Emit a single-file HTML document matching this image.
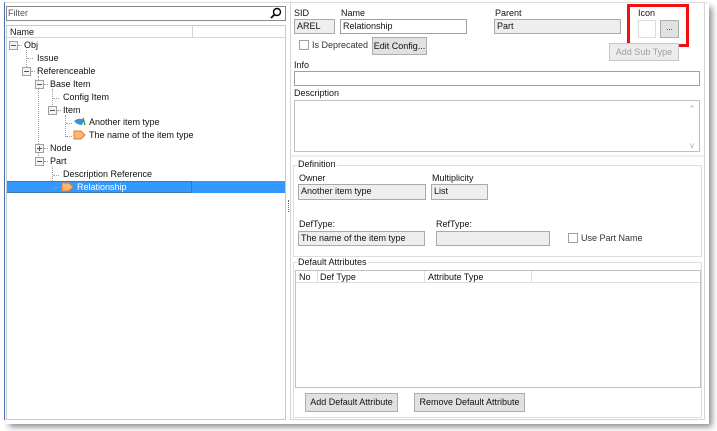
<!DOCTYPE html>
<html><head><meta charset="utf-8">
<style>
*{box-sizing:border-box;margin:0;padding:0}
body{width:717px;height:431px;background:#fff;font-family:"Liberation Sans",sans-serif;font-size:9px;color:#111;position:relative;overflow:hidden}
.a{position:absolute}
.t{position:absolute;white-space:nowrap;line-height:11px}
.box{position:absolute;border:1px solid #a0a0a0;background:#fff}
.ro{background:#eeeeee;border-color:#a9a9a9}
.btn{position:absolute;border:1px solid #adadad;background:#e1e1e1;text-align:center;line-height:16px;white-space:nowrap}
.cb{position:absolute;width:10px;height:10px;border:1px solid #a0a0a0;background:#fff}
.hl{position:absolute;border-top:1px dotted #a0a0a0;width:6px}
.vl{position:absolute;border-left:1px dotted #a0a0a0}
.exp{position:absolute;width:9px;height:9px;border:1px solid #a0a0a0;background:#f4f4f4}
.exp:after{content:"";position:absolute;left:1px;top:3px;width:5px;height:1px;background:#555}
.plus:before{content:"";position:absolute;left:3px;top:1px;width:1px;height:5px;background:#555}
</style></head><body>
<div class="a" style="left:6px;top:4px;width:703px;height:420px;box-shadow:3px 3px 6px rgba(0,0,0,0.45)"></div>
<div class="a" style="left:4px;top:2px;width:701px;height:418px;background:#fff;border-left:1px solid #4a6fb0;border-top:1px solid #ddd"></div>
<div class="box" style="left:6px;top:6px;width:280px;height:15px;border-color:#8a8a8a"></div>
<div class="t" style="left:8px;top:8px;color:#555">Filter</div>
<svg class="a" style="left:270px;top:7px" width="12" height="12"><circle cx="7" cy="5" r="3.5" fill="none" stroke="#000" stroke-width="1.4"/><line x1="4.5" y1="7.5" x2="1" y2="11" stroke="#000" stroke-width="1.8"/></svg>
<div class="box" style="left:6px;top:25px;width:280px;height:395px;border-color:#c8c8c8"></div>
<div class="a" style="left:7px;top:26px;width:278px;height:12px;border-bottom:1px solid #d5d5d5"></div>
<div class="a" style="left:192px;top:26px;width:1px;height:12px;background:#d5d5d5"></div>
<div class="t" style="left:10px;top:27px">Name</div>
<div class="vl" style="left:26px;top:50px;height:23px"></div>
<div class="vl" style="left:38px;top:76px;height:86px"></div>
<div class="vl" style="left:52px;top:89px;height:22px"></div>
<div class="vl" style="left:65px;top:115px;height:22px"></div>
<div class="vl" style="left:52px;top:166px;height:21px"></div>
<div class="hl" style="left:27px;top:58px"></div>
<div class="hl" style="left:53px;top:98px"></div>
<div class="hl" style="left:66px;top:123px"></div>
<div class="hl" style="left:66px;top:136px"></div>
<div class="hl" style="left:53px;top:175px"></div>
<div class="hl" style="left:53px;top:187px"></div>
<div class="exp" style="left:9px;top:41px"></div><div class="hl" style="left:18px;top:45px;width:4px"></div>
<div class="exp" style="left:22px;top:67px"></div><div class="hl" style="left:31px;top:71px;width:4px"></div>
<div class="exp" style="left:35px;top:80px"></div><div class="hl" style="left:44px;top:84px;width:4px"></div>
<div class="exp" style="left:48px;top:106px"></div><div class="hl" style="left:57px;top:110px;width:4px"></div>
<div class="exp plus" style="left:35px;top:144px"></div><div class="hl" style="left:44px;top:148px;width:4px"></div>
<div class="exp" style="left:35px;top:157px"></div><div class="hl" style="left:44px;top:161px;width:4px"></div>
<div class="t" style="left:24px;top:40px">Obj</div>
<div class="t" style="left:37px;top:53px">Issue</div>
<div class="t" style="left:37px;top:66px">Referenceable</div>
<div class="t" style="left:50px;top:79px">Base Item</div>
<div class="t" style="left:63px;top:92px">Config Item</div>
<div class="t" style="left:63px;top:105px">Item</div>
<svg class="a" style="left:73px;top:117px" width="14" height="10"><path d="M1 4 Q6 0 11 3 L9 8 Q4 8 1 4Z" fill="#3a8fd8"/><path d="M10 1 L12 8" stroke="#3a3" stroke-width="1.5"/></svg>
<div class="t" style="left:89px;top:117px">Another item type</div>
<svg class="a" style="left:73px;top:130px" width="13" height="10"><path d="M1 1 H8 L12 5 L8 9 H1 Z" fill="#fbb77a" stroke="#e8772a"/></svg>
<div class="t" style="left:89px;top:130px">The name of the item type</div>
<div class="t" style="left:50px;top:143px">Node</div>
<div class="t" style="left:50px;top:156px">Part</div>
<div class="t" style="left:63px;top:169px">Description Reference</div>
<div class="a" style="left:7px;top:181px;width:278px;height:12px;background:#3399ff"></div>
<div class="a" style="left:7px;top:181px;width:185px;height:12px;border:1px solid #555;border-left:none;opacity:.5"></div>
<div class="hl" style="left:53px;top:187px;width:8px"></div>
<svg class="a" style="left:61px;top:182px" width="13" height="10"><path d="M1 1 H8 L12 5 L8 9 H1 Z" fill="#fbb77a" stroke="#e8772a"/></svg>
<div class="t" style="left:77px;top:182px;color:#fff">Relationship</div>
<div class="a" style="left:288px;top:200px;width:1px;height:12px;border-left:1px dotted #666"></div>
<div class="a" style="left:290px;top:2px;width:415px;height:418px;border:1px solid #d5d5d5;border-top:none"></div>
<div class="t" style="left:294px;top:8px">SID</div>
<div class="box ro" style="left:294px;top:19px;width:41px;height:15px"></div>
<div class="t" style="left:297px;top:21px">AREL</div>
<div class="t" style="left:341px;top:8px">Name</div>
<div class="box" style="left:340px;top:19px;width:127px;height:15px"></div>
<div class="t" style="left:343px;top:21px">Relationship</div>
<div class="t" style="left:495px;top:8px">Parent</div>
<div class="box ro" style="left:494px;top:19px;width:127px;height:15px"></div>
<div class="t" style="left:497px;top:21px">Part</div>
<div class="t" style="left:638px;top:8px">Icon</div>
<div class="box" style="left:638px;top:20px;width:18px;height:18px;border-color:#ddd"></div>
<div class="btn" style="left:660px;top:20px;width:19px;height:18px;line-height:14px;font-size:8px">...</div>
<div class="a" style="left:627px;top:4px;width:62px;height:43px;border:3px solid #f01010"></div>
<div class="cb" style="left:299px;top:40px"></div>
<div class="t" style="left:312px;top:40px;color:#333">Is Deprecated</div>
<div class="btn" style="left:372px;top:37px;width:55px;height:18px">Edit Config...</div>
<div class="btn" style="left:609px;top:43px;width:70px;height:18px;color:#a0a0a0;border-color:#c8c8c8;background:#ececec">Add Sub Type</div>
<div class="t" style="left:294px;top:60px">Info</div>
<div class="box" style="left:294px;top:71px;width:406px;height:15px"></div>
<div class="t" style="left:294px;top:88px">Description</div>
<div class="box" style="left:294px;top:100px;width:406px;height:52px;border-color:#c0c0c0"></div>
<div class="t" style="left:690px;top:103px;color:#aaa;font-size:8px">^</div>
<div class="t" style="left:690px;top:140px;color:#aaa;font-size:8px">v</div>
<div class="a" style="left:291px;top:155px;width:413px;height:2px;background:#eee"></div>
<div class="a" style="left:293px;top:165px;width:409px;height:92px;border:1px solid #ddd"></div>
<div class="t" style="left:297px;top:159px;background:#fff;padding:0 1px">Definition</div>
<div class="t" style="left:299px;top:173px">Owner</div>
<div class="box ro" style="left:298px;top:184px;width:128px;height:16px"></div>
<div class="t" style="left:301px;top:186px">Another item type</div>
<div class="t" style="left:432px;top:173px">Multiplicity</div>
<div class="box ro" style="left:431px;top:184px;width:57px;height:16px"></div>
<div class="t" style="left:434px;top:186px">List</div>
<div class="t" style="left:299px;top:219px">DefType:</div>
<div class="box ro" style="left:298px;top:231px;width:127px;height:15px"></div>
<div class="t" style="left:301px;top:233px">The name of the item type</div>
<div class="t" style="left:436px;top:219px">RefType:</div>
<div class="box ro" style="left:436px;top:231px;width:114px;height:15px"></div>
<div class="cb" style="left:568px;top:233px"></div>
<div class="t" style="left:581px;top:233px;color:#333">Use Part Name</div>
<div class="a" style="left:293px;top:262px;width:409px;height:156px;border:1px solid #ddd"></div>
<div class="t" style="left:297px;top:257px;background:#fff;padding:0 1px">Default Attributes</div>
<div class="box" style="left:295px;top:270px;width:406px;height:118px;border-color:#c0c0c0"></div>
<div class="a" style="left:296px;top:271px;width:404px;height:12px;border-bottom:1px solid #ddd"></div>
<div class="a" style="left:317px;top:271px;width:1px;height:12px;background:#ddd"></div>
<div class="a" style="left:424px;top:271px;width:1px;height:12px;background:#ddd"></div>
<div class="a" style="left:531px;top:271px;width:1px;height:12px;background:#ddd"></div>
<div class="t" style="left:299px;top:272px">No</div>
<div class="t" style="left:320px;top:272px">Def Type</div>
<div class="t" style="left:428px;top:272px">Attribute Type</div>
<div class="btn" style="left:305px;top:393px;width:93px;height:19px;line-height:17px">Add Default Attribute</div>
<div class="btn" style="left:414px;top:393px;width:111px;height:19px;line-height:17px">Remove Default Attribute</div>
</body></html>
